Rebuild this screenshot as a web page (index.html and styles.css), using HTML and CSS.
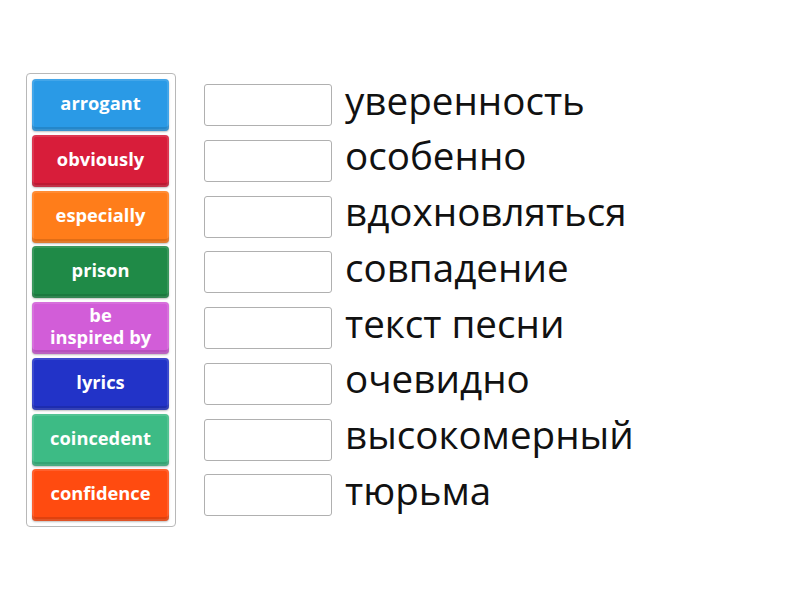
FILE: index.html
```html
<!DOCTYPE html>
<html>
<head>
<meta charset="utf-8">
<link rel="stylesheet" href="styles.css">
</head>
<body>
<div class="game">
  <div class="bank">
    <div class="card c-blue">arrogant</div>
    <div class="card c-red">obviously</div>
    <div class="card c-orange">especially</div>
    <div class="card c-green">prison</div>
    <div class="card c-purple">be<br>inspired by</div>
    <div class="card c-navy">lyrics</div>
    <div class="card c-teal">coincedent</div>
    <div class="card c-flame">confidence</div>
  </div>
  <div class="targets">
    <div class="row"><div class="slot"></div><span class="word">уверенность</span></div>
    <div class="row"><div class="slot"></div><span class="word">особенно</span></div>
    <div class="row"><div class="slot"></div><span class="word">вдохновляться</span></div>
    <div class="row"><div class="slot"></div><span class="word">совпадение</span></div>
    <div class="row"><div class="slot"></div><span class="word">текст песни</span></div>
    <div class="row"><div class="slot"></div><span class="word">очевидно</span></div>
    <div class="row"><div class="slot"></div><span class="word">высокомерный</span></div>
    <div class="row"><div class="slot"></div><span class="word">тюрьма</span></div>
  </div>
</div>
</body>
</html>
```
FILE: styles.css
```css
html, body {
  margin: 0;
  padding: 0;
  background: #fff;
}
body {
  font-family: "Open Sans", "Liberation Sans", sans-serif;
}
.game {
  display: flex;
  align-items: flex-start;
  padding: 73px 0 0 26px;
  gap: 28px;
}
.bank {
  box-sizing: border-box;
  width: 150px;
  border: 1px solid #b8b8b8;
  border-radius: 4px;
  padding: 5px 6px 5px 5px;
  display: flex;
  flex-direction: column;
  gap: 3.75px;
}
.card {
  box-sizing: border-box;
  height: 52px;
  border-radius: 4px;
  color: #fff;
  font-weight: 700;
  font-size: 18.3px;
  line-height: 22px;
  padding-bottom: 4px;
  text-align: center;
  display: flex;
  align-items: center;
  justify-content: center;
  box-shadow: inset 0 -4px 0 rgba(0,0,0,0.12), inset 0 0 0 2px rgba(255,255,255,0.12), 0 1px 2px rgba(0,0,0,0.25);
}
.c-blue { background: #2a9ae6; }
.c-red { background: #d81d3a; }
.c-orange { background: #ff7d1a; }
.c-green { background: #1f8a47; }
.c-purple { background: #d25dd8; }
.c-navy { background: #2233c8; }
.c-teal { background: #3dbb85; }
.c-flame { background: #ff4b10; }
.targets {
  display: flex;
  flex-direction: column;
  padding-top: 6px;
  gap: 3.75px;
}
.row {
  height: 52px;
  display: flex;
  align-items: center;
}
.slot {
  box-sizing: border-box;
  width: 128px;
  height: 42px;
  border: 1px solid #b0b0b0;
  border-radius: 3px;
  background: #fff;
  flex: none;
}
.word {
  margin-left: 13px;
  font-size: 38.6px;
  line-height: 42px;
  padding-bottom: 11px;
  color: #111;
  white-space: nowrap;
}
```
